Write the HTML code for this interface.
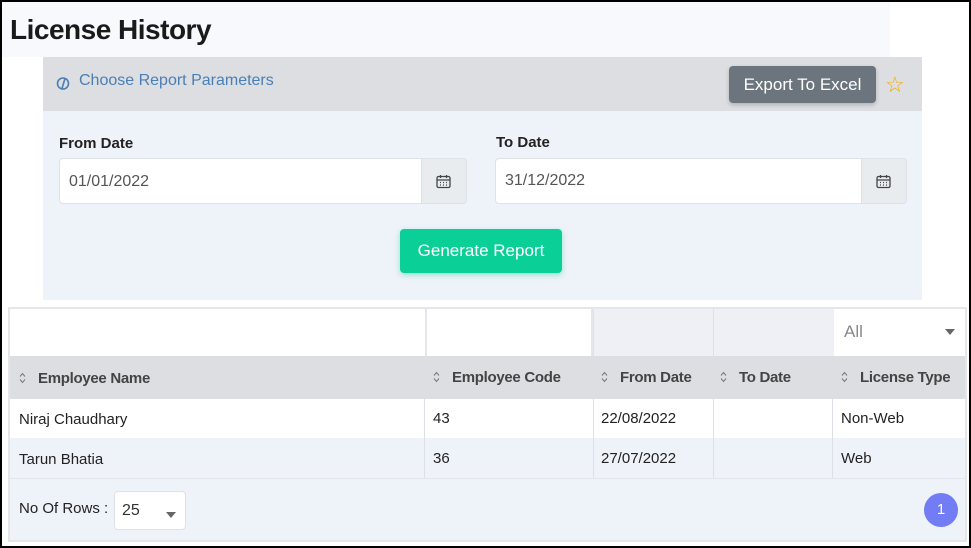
<!DOCTYPE html>
<html><head><style>
*{box-sizing:border-box;margin:0;padding:0}
body{width:971px;height:548px;position:relative;background:#fff;font-family:"Liberation Sans",Arial,sans-serif;overflow:hidden}
.frame{position:absolute;left:0;top:0;width:971px;height:548px;border:2px solid #000;z-index:10;pointer-events:none}
.a{position:absolute}
h1{position:absolute;left:10px;top:14px;font-size:28px;font-weight:bold;color:#1a1a1a;letter-spacing:-0.5px}
.lbl{font-size:15px;font-weight:bold;color:#222}
.inp{background:#fff;border:1px solid #dee2e6;border-radius:4px;font-size:16px;color:#555;padding:14px 0 0 9px}
.add{background:#e9ecef;border:1px solid #dee2e6;border-radius:0 4px 4px 0}
.cell{position:absolute;font-size:15px;color:#222}
.th{font-size:15px;font-weight:bold;color:#444;letter-spacing:-0.3px}
.th svg{vertical-align:-1px;margin-right:12px}
</style></head><body>
<div class="frame"></div>
<div class="a" style="left:2px;top:2px;width:888px;height:55px;background:#f8f9fd"></div>
<h1>License History</h1>
<div class="a" style="left:7px;top:57px;width:36px;height:243px;background:#fff"></div>
<div class="a" style="left:43px;top:57px;width:879px;height:54px;background:#dcdee2"></div>
<div class="a" style="left:43px;top:111px;width:879px;height:189px;background:#eef2f9"></div>
<svg class="a" style="left:56px;top:76px" width="14" height="14" viewBox="0 0 14 14"><circle cx="7" cy="7.5" r="5.5" fill="none" stroke="#4a7fb5" stroke-width="1.6"/><path d="M9 2.5 L6 12.5" stroke="#4a7fb5" stroke-width="1.6"/></svg>
<div class="a" style="left:79px;top:72px;font-size:16px;color:#4a7fb5">Choose Report Parameters</div>
<div class="a" style="left:729px;top:66px;width:147px;height:37px;background:#6c757d;border-radius:4px;color:#fff;font-size:17px;text-align:center;line-height:37px;box-shadow:0 2px 4px rgba(0,0,0,.2)">Export To Excel</div>
<div class="a" style="left:885px;top:72px;font-size:22px;color:#f7a900">☆</div>
<div class="a lbl" style="left:59px;top:135px">From Date</div>
<div class="a inp" style="left:59px;top:158px;width:366px;height:46px">01/01/2022</div>
<div class="a add" style="left:421px;top:158px;width:46px;height:46px"></div>
<div class="a lbl" style="left:496px;top:134px">To Date</div>
<div class="a inp" style="left:495px;top:158px;width:370px;height:46px;padding-top:13px">31/12/2022</div>
<div class="a add" style="left:861px;top:158px;width:46px;height:46px"></div>
<svg class="a" style="left:436px;top:174px" width="15" height="15" viewBox="0 0 15 15"><rect x="1" y="2.5" width="13" height="11" rx="1.5" fill="none" stroke="#444" stroke-width="1.3"/><path d="M1 6h13M4.5 1v3M10.5 1v3" stroke="#444" stroke-width="1.3"/><path d="M4 8.5h1M7 8.5h1M10 8.5h1M4 11h1M7 11h1M10 11h1" stroke="#444" stroke-width="1.2"/></svg>
<svg class="a" style="left:876px;top:174px" width="15" height="15" viewBox="0 0 15 15"><rect x="1" y="2.5" width="13" height="11" rx="1.5" fill="none" stroke="#444" stroke-width="1.3"/><path d="M1 6h13M4.5 1v3M10.5 1v3" stroke="#444" stroke-width="1.3"/><path d="M4 8.5h1M7 8.5h1M10 8.5h1M4 11h1M7 11h1M10 11h1" stroke="#444" stroke-width="1.2"/></svg>
<div class="a" style="left:400px;top:229px;width:162px;height:44px;background:#0acf97;border-radius:4px;color:#fff;font-size:17px;text-align:center;line-height:44px;box-shadow:0 2px 6px rgba(10,207,151,.4)">Generate Report</div>

<div class="a" style="left:8px;top:307px;width:959px;height:235px;background:#e4e6ea"></div>
<div class="a" style="left:10px;top:309px;width:415px;height:47px;background:#fff"></div>
<div class="a" style="left:427px;top:309px;width:164px;height:47px;background:#fff"></div>
<div class="a" style="left:593px;top:309px;width:372px;height:47px;background:#eef0f5"></div>
<div class="a" style="left:834px;top:309px;width:131px;height:47px;background:#fff"></div>
<div class="a" style="left:844px;top:322px;font-size:17px;color:#888">All</div>
<div class="a" style="left:945px;top:329px;width:0;height:0;border-left:5px solid transparent;border-right:5px solid transparent;border-top:6px solid #666"></div>
<div class="a" style="left:593px;top:309px;width:1px;height:169px;background:#dde0e5"></div>
<div class="a" style="left:713px;top:309px;width:1px;height:169px;background:#dde0e5"></div>
<div class="a" style="left:10px;top:356px;width:955px;height:43px;background:#dcdee2"></div>
<div class="a" style="left:10px;top:399px;width:955px;height:39px;background:#fff"></div>
<div class="a" style="left:10px;top:438px;width:955px;height:40px;background:#eef2f9"></div>
<div class="a" style="left:424px;top:399px;width:1px;height:79px;background:#dde0e5"></div>
<div class="a" style="left:593px;top:399px;width:1px;height:79px;background:#dde0e5"></div>
<div class="a" style="left:713px;top:399px;width:1px;height:79px;background:#dde0e5"></div>
<div class="a" style="left:832px;top:399px;width:1px;height:79px;background:#dde0e5"></div>
<div class="a" style="left:10px;top:479px;width:955px;height:61px;background:#eef2f9"></div>

<div class="a th" style="left:19px;top:370px"><svg width="7" height="12" viewBox="0 0 7 12"><path d="M1 4.5L3.5 1.5L6 4.5M1 7.5L3.5 10.5L6 7.5" fill="none" stroke="#777" stroke-width="1"/></svg>Employee Name</div>
<div class="a th" style="left:433px;top:369px"><svg width="7" height="12" viewBox="0 0 7 12"><path d="M1 4.5L3.5 1.5L6 4.5M1 7.5L3.5 10.5L6 7.5" fill="none" stroke="#777" stroke-width="1"/></svg>Employee Code</div>
<div class="a th" style="left:601px;top:369px"><svg width="7" height="12" viewBox="0 0 7 12"><path d="M1 4.5L3.5 1.5L6 4.5M1 7.5L3.5 10.5L6 7.5" fill="none" stroke="#777" stroke-width="1"/></svg>From Date</div>
<div class="a th" style="left:720px;top:369px"><svg width="7" height="12" viewBox="0 0 7 12"><path d="M1 4.5L3.5 1.5L6 4.5M1 7.5L3.5 10.5L6 7.5" fill="none" stroke="#777" stroke-width="1"/></svg>To Date</div>
<div class="a th" style="left:841px;top:369px"><svg width="7" height="12" viewBox="0 0 7 12"><path d="M1 4.5L3.5 1.5L6 4.5M1 7.5L3.5 10.5L6 7.5" fill="none" stroke="#777" stroke-width="1"/></svg>License Type</div>

<div class="cell" style="left:19px;top:411px">Niraj Chaudhary</div>
<div class="cell" style="left:433px;top:410px">43</div>
<div class="cell" style="left:601px;top:410px">22/08/2022</div>
<div class="cell" style="left:841px;top:410px">Non-Web</div>
<div class="cell" style="left:19px;top:451px">Tarun Bhatia</div>
<div class="cell" style="left:433px;top:450px">36</div>
<div class="cell" style="left:601px;top:450px">27/07/2022</div>
<div class="cell" style="left:841px;top:450px">Web</div>

<div class="cell" style="left:19px;top:500px">No Of Rows :</div>
<div class="a" style="left:114px;top:491px;width:72px;height:39px;background:#fff;border:1px solid #dee2e6;border-radius:4px;font-size:16px;color:#333;padding:10px 0 0 7px">25</div>
<div class="a" style="left:166px;top:512px;width:0;height:0;border-left:5px solid transparent;border-right:5px solid transparent;border-top:6px solid #666"></div>
<div class="a" style="left:924px;top:493px;width:34px;height:34px;border-radius:50%;background:#727cf5;color:#fff;font-size:15px;text-align:center;line-height:34px">1</div>
</body></html>
